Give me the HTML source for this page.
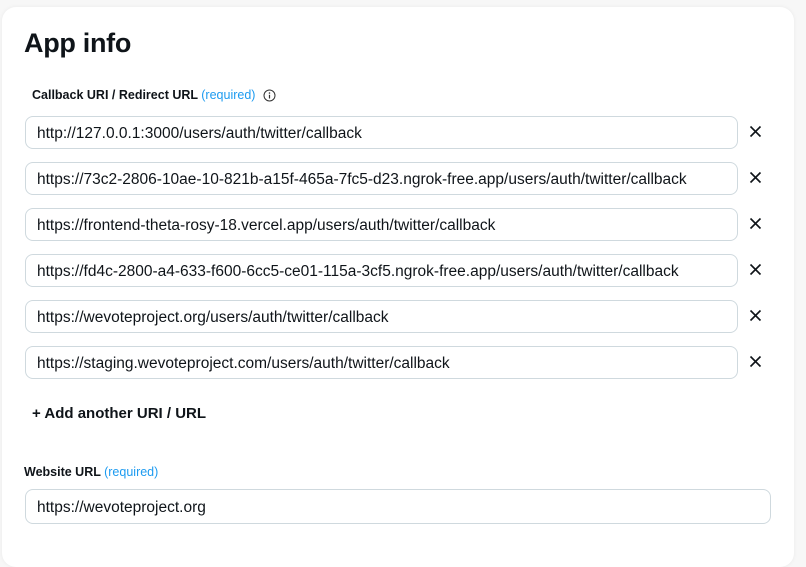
<!DOCTYPE html>
<html><head><meta charset="utf-8"><style>
*{box-sizing:border-box;margin:0;padding:0}
body{width:806px;height:541px;background:#f7f7f7;font-family:"Liberation Sans",Helvetica,Arial,sans-serif;color:#0f1419;overflow:hidden;position:relative}
.card{position:absolute;left:2px;top:7px;width:792px;height:560px;background:#fff;border-radius:14px;box-shadow:0 0 4px rgba(0,0,0,0.06)}
h1{position:absolute;left:24px;top:28px;font-size:27px;font-weight:bold;letter-spacing:-0.3px}
.lbl{position:absolute;font-size:12.5px;font-weight:bold;color:#0f1419}
.req{color:#1d9bf0;font-weight:normal}
.inp{position:absolute;left:25px;width:713px;height:33px;border:1px solid #cfd9de;border-radius:8px;font-size:15.5px;line-height:32px;padding-left:11px;white-space:nowrap;overflow:hidden;padding-top:1px}
.x{position:absolute;left:749px;width:13px;height:13px}
.add{position:absolute;left:32px;top:405px;font-size:15px;font-weight:bold}
</style></head><body>
<div class="card"></div>
<h1>App info</h1>
<div class="lbl" style="left:32px;top:88px">Callback URI / Redirect URL <span class="req">(required)</span>
<svg style="vertical-align:-3px;margin-left:4px" width="13" height="13" viewBox="0 0 13 13"><circle cx="6.5" cy="6.5" r="5.5" fill="none" stroke="#333" stroke-width="1"/><circle cx="6.5" cy="4" r="0.8" fill="#333"/><path d="M6.5 5.8V9.5" stroke="#333" stroke-width="1.2"/></svg></div>
<div class="inp" style="top:116px">http://127.0.0.1:3000/users/auth/twitter/callback</div>
<div class="inp" style="top:162px">https://73c2-2806-10ae-10-821b-a15f-465a-7fc5-d23.ngrok-free.app/users/auth/twitter/callback</div>
<div class="inp" style="top:208px">https://frontend-theta-rosy-18.vercel.app/users/auth/twitter/callback</div>
<div class="inp" style="top:254px">https://fd4c-2800-a4-633-f600-6cc5-ce01-115a-3cf5.ngrok-free.app/users/auth/twitter/callback</div>
<div class="inp" style="top:300px">https://wevoteproject.org/users/auth/twitter/callback</div>
<div class="inp" style="top:346px">https://staging.wevoteproject.com/users/auth/twitter/callback</div>
<svg class="x" style="top:125px" viewBox="0 0 13 13"><path d="M1.5 1.5L11.5 11.5M11.5 1.5L1.5 11.5" stroke="#0f1419" stroke-width="1.6"/></svg>
<svg class="x" style="top:171px" viewBox="0 0 13 13"><path d="M1.5 1.5L11.5 11.5M11.5 1.5L1.5 11.5" stroke="#0f1419" stroke-width="1.6"/></svg>
<svg class="x" style="top:217px" viewBox="0 0 13 13"><path d="M1.5 1.5L11.5 11.5M11.5 1.5L1.5 11.5" stroke="#0f1419" stroke-width="1.6"/></svg>
<svg class="x" style="top:263px" viewBox="0 0 13 13"><path d="M1.5 1.5L11.5 11.5M11.5 1.5L1.5 11.5" stroke="#0f1419" stroke-width="1.6"/></svg>
<svg class="x" style="top:309px" viewBox="0 0 13 13"><path d="M1.5 1.5L11.5 11.5M11.5 1.5L1.5 11.5" stroke="#0f1419" stroke-width="1.6"/></svg>
<svg class="x" style="top:355px" viewBox="0 0 13 13"><path d="M1.5 1.5L11.5 11.5M11.5 1.5L1.5 11.5" stroke="#0f1419" stroke-width="1.6"/></svg>
<div class="add">+ Add another URI / URL</div>
<div class="lbl" style="left:24px;top:465px">Website URL <span class="req">(required)</span></div>
<div class="inp" style="top:489px;width:746px;height:35px;line-height:33px">https://wevoteproject.org</div>
</body></html>
